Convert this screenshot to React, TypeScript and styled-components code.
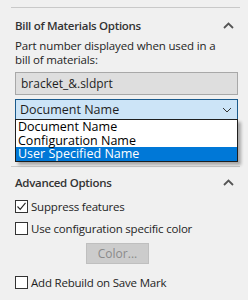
import React from "react";
import styled, { createGlobalStyle } from "styled-components";

const GlobalStyle = createGlobalStyle`
  html, body {
    margin: 0;
    padding: 0;
    background: #f0f0f0;
  }
  body {
    font-family: "Open Sans", "Noto Sans", sans-serif;
    font-size: 12px;
    color: #1e1e1e;
  }
`;

const options = ["Document Name", "Configuration Name", "User Specified Name"];

const ChevronUp = () => (
  <svg width="11" height="7" viewBox="0 0 11 7">
    <path d="M1 6 L5.5 1.5 L10 6" fill="none" stroke="#555" strokeWidth="1.8" />
  </svg>
);

const ChevronDown = () => (
  <svg width="10" height="6" viewBox="0 0 10 6">
    <path d="M1 1 L5 5 L9 1" fill="none" stroke="#333" strokeWidth="1" />
  </svg>
);

const Tick = () => (
  <svg width="11" height="11" viewBox="0 0 11 11">
    <path d="M1.5 5.5 L4.2 8.3 L9.5 1.8" fill="none" stroke="#222" strokeWidth="1.1" />
  </svg>
);

const App: React.FC = () => {
  return (
    <>
      <GlobalStyle />
      <Panel>
        <Section>
          <Header>
            <Title>Bill of Materials Options</Title>
            <ChevronUp />
          </Header>
          <Label>Part number displayed when used in a bill of materials:</Label>
          <TextBox>bracket_&amp;.sldprt</TextBox>
          <ComboWrap>
            <Combo>
              <span>Document Name</span>
              <ChevronDown />
            </Combo>
            <List>
              {options.map((o, i) => (
                <Item key={o} selected={i === 2}>
                  {o}
                </Item>
              ))}
            </List>
          </ComboWrap>
        </Section>
        <Section>
          <Header compact>
            <Title>Advanced Options</Title>
            <ChevronUp />
          </Header>
          <CheckRow>
            <Box>
              <Tick />
            </Box>
            Suppress features
          </CheckRow>
          <CheckRow>
            <Box />
            Use configuration specific color
          </CheckRow>
          <ButtonRow>
            <DisabledButton>Color...</DisabledButton>
          </ButtonRow>
          <CheckRow>
            <Box />
            Add Rebuild on Save Mark
          </CheckRow>
        </Section>
      </Panel>
    </>
  );
};

export default App;

const Panel = styled.div`
  width: 248px;
  height: 300px;
  overflow: hidden;
  padding-top: 7px;
  box-sizing: border-box;
`;

const Section = styled.div`
  margin: 0 8px 0 11px;
  border-top: 1px solid #c9c9c9;
  padding: 0 2px 6px 4px;
`;

const Header = styled.div<{ compact?: boolean }>`
  display: flex;
  align-items: center;
  justify-content: space-between;
  height: ${(p) => (p.compact ? "26px" : "30px")};
  padding: 2px 4px 0 0;
`;

const Title = styled.div`
  font-weight: 600;
  font-size: 11.5px;
  letter-spacing: -0.3px;
  color: #333;
`;

const Label = styled.div`
  font-size: 11.5px;
  letter-spacing: -0.15px;
  line-height: 14px;
  padding-right: 16px;
  margin-top: -1px;
`;

const TextBox = styled.div`
  margin-top: 5px;
  height: 21px;
  background: #dedede;
  border: 1px solid #a8a8a8;
  display: flex;
  align-items: center;
  padding-left: 5px;
`;

const ComboWrap = styled.div`
  position: relative;
  margin-top: 4px;
  height: 61px;
`;

const Combo = styled.div`
  height: 19px;
  background: #cce4f7;
  border: 1px solid #1a5a8c;
  display: flex;
  align-items: center;
  justify-content: space-between;
  padding: 0 5px 0 4px;
  font-size: 12.5px;
`;

const List = styled.div`
  position: absolute;
  left: 0;
  right: 0;
  top: 20px;
  background: #fff;
  border: 1px solid #1e1e1e;
  box-shadow: 3px 3px 3px rgba(0, 0, 0, 0.3);
`;

const Item = styled.div<{ selected?: boolean }>`
  height: 13.5px;
  line-height: 13.5px;
  padding-left: 2px;
  font-size: 12.5px;
  background: ${(p) => (p.selected ? "#0078d7" : "transparent")};
  color: ${(p) => (p.selected ? "#fff" : "#000")};
`;

const CheckRow = styled.label`
  display: flex;
  align-items: center;
  gap: 3px;
  height: 22px;
  font-size: 11.5px;
  letter-spacing: -0.2px;
`;

const Box = styled.span`
  width: 13px;
  height: 13px;
  box-sizing: border-box;
  border: 1px solid #333;
  background: #fff;
  display: flex;
  align-items: center;
  justify-content: center;
`;

const ButtonRow = styled.div`
  display: flex;
  padding: 4px 0 7px 71px;
`;

const DisabledButton = styled.div`
  width: 63px;
  height: 21px;
  background: #cccccc;
  border: 1px solid #bfbfbf;
  box-sizing: border-box;
  color: #8a8a8a;
  display: flex;
  align-items: center;
  justify-content: center;
`;
